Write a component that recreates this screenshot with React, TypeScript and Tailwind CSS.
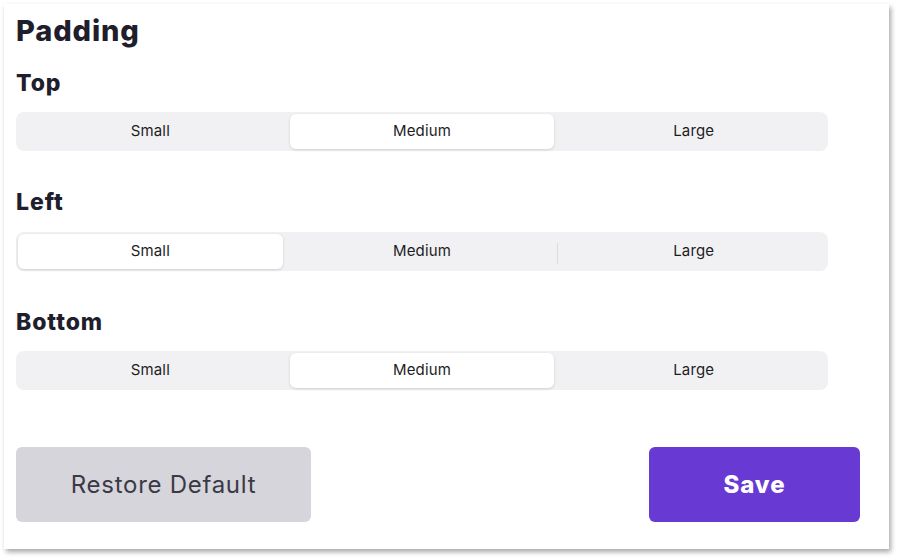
import { useState } from 'react';

type Size = 'Small' | 'Medium' | 'Large';
const SIZES: Size[] = ['Small', 'Medium', 'Large'];

const heading = { fontFamily: 'Inter, "Noto Sans", sans-serif' };

function Segmented({ value, onChange }: { value: Size; onChange: (v: Size) => void }) {
  const idx = SIZES.indexOf(value);
  return (
    <div className="flex h-[39px] w-[812px] items-stretch gap-[7px] rounded-[8px] bg-[#f1f1f4] p-[2px]">
      {SIZES.map((s, i) => {
        const active = s === value;
        // divider only between two unselected segments
        const showDivider = i > 0 && idx !== i && idx !== i - 1;
        return (
          <div key={s} className="relative flex flex-1 items-stretch">
            {showDivider && (
              <span className="absolute left-[-4px] top-[9px] h-[21px] w-px bg-[#dcdce0]" />
            )}
            <button
              type="button"
              onClick={() => onChange(s)}
              className={`flex-1 rounded-[6px] text-[15px] tracking-[0.01em] text-[#1d1d1f] ${
                active ? 'bg-white shadow-[0_1px_3px_rgba(0,0,0,0.14)]' : ''
              }`}
              style={{ fontFamily: 'Inter, "Liberation Sans", sans-serif' }}
            >
              {s}
            </button>
          </div>
        );
      })}
    </div>
  );
}

export default function App() {
  const [top, setTop] = useState<Size>('Medium');
  const [left, setLeft] = useState<Size>('Small');
  const [bottom, setBottom] = useState<Size>('Medium');

  return (
    <div className="h-[558px] w-[898px] bg-white pl-[4px] pt-[4px]">
      <div className="flex h-[545px] w-[885px] flex-col bg-white px-[12px] shadow-[2px_3px_5px_rgba(0,0,0,0.35)]">
        <h1
          className="mt-[9px] text-[29px] font-extrabold leading-[36px] tracking-[0.03em] text-[#1e1e2d]"
          style={heading}
        >
          Padding
        </h1>
        <h2
          className="mt-[20px] text-[23px] font-extrabold leading-[28px] tracking-[0.04em] text-[#1e1e2d]"
          style={heading}
        >
          Top
        </h2>
        <div className="mt-[15px]">
          <Segmented value={top} onChange={setTop} />
        </div>
        <h2
          className="mt-[37px] text-[23px] font-extrabold leading-[28px] tracking-[0.04em] text-[#1e1e2d]"
          style={heading}
        >
          Left
        </h2>
        <div className="mt-[16px]">
          <Segmented value={left} onChange={setLeft} />
        </div>
        <h2
          className="mt-[37px] text-[23px] font-extrabold leading-[28px] tracking-[0.04em] text-[#1e1e2d]"
          style={heading}
        >
          Bottom
        </h2>
        <div className="mt-[15px]">
          <Segmented value={bottom} onChange={setBottom} />
        </div>
        <div className="mt-[57px] flex w-[844px] justify-between">
          <button
            type="button"
            onClick={() => {
              setTop('Medium');
              setLeft('Medium');
              setBottom('Medium');
            }}
            className="h-[75px] w-[295px] rounded-[6px] bg-[#d6d5dc] text-[24px] tracking-[0.03em] text-[#3a3a46]"
            style={heading}
          >
            Restore Default
          </button>
          <button
            type="button"
            className="h-[75px] w-[211px] rounded-[6px] bg-[#6839d3] text-[24px] font-extrabold tracking-[0.04em] text-white"
            style={heading}
          >
            Save
          </button>
        </div>
      </div>
    </div>
  );
}
